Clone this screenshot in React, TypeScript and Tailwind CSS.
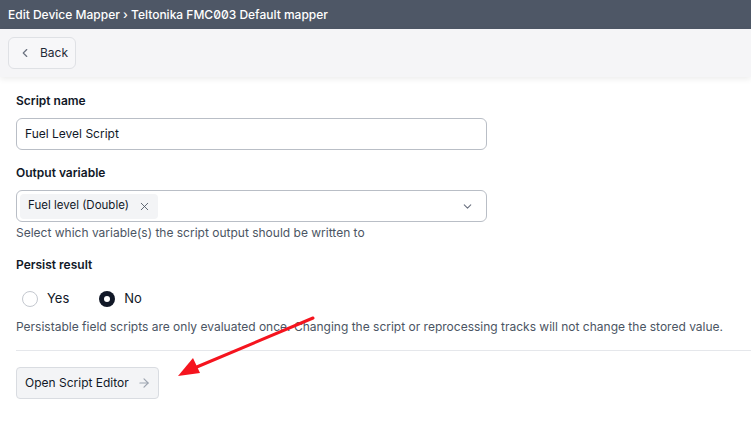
import { ArrowRight, ChevronDown, ChevronLeft, X } from 'lucide-react'

function FieldLabel({ children }: { children: React.ReactNode }) {
  return <div className="text-[12px] font-semibold leading-[18px] text-[#111827]">{children}</div>
}

function Radio({ label, checked }: { label: string; checked?: boolean }) {
  return (
    <label className="flex items-center gap-[9px]">
      {checked ? (
        <span className="flex h-4 w-4 items-center justify-center rounded-full bg-[#111827]">
          <span className="h-[6px] w-[6px] rounded-full bg-white" />
        </span>
      ) : (
        <span className="h-4 w-4 rounded-full border border-[#c4c8cf] bg-white" />
      )}
      <span className="text-[13px] text-[#111827]">{label}</span>
    </label>
  )
}

export default function App() {
  return (
    <div className="relative h-[430px] w-[751px] overflow-hidden bg-white font-['Inter',sans-serif] [font-feature-settings:'zero']">
      <div className="flex h-[29px] items-center bg-[#4e5766] px-2 text-[12px] font-medium text-white">
        Edit Device Mapper › Teltonika FMC003 Default mapper
      </div>

      <div className="flex h-[48px] items-center bg-[#f5f5f7] px-2 shadow-[0_2px_6px_rgba(0,0,0,0.08)]">
        <button className="flex h-8 items-center gap-[8px] rounded-md border border-[#dfe1e5] bg-[#f7f7f9] pl-[9px] pr-[7px] text-[12px] text-[#1f2937]">
          <ChevronLeft className="h-[14px] w-[14px] text-[#6b7280]" strokeWidth={2} />
          Back
        </button>
      </div>

      <div className="px-4 pt-[15px]">
        <FieldLabel>Script name</FieldLabel>
        <div className="mt-2 flex h-8 w-[471px] items-center rounded-md border border-[#b9bec6] px-[8px] text-[12px] text-[#111827]">
          Fuel Level Script
        </div>

        <div className="mt-[14px]">
          <FieldLabel>Output variable</FieldLabel>
        </div>
        <div className="mt-2 flex h-8 w-[471px] items-center justify-between rounded-md border border-[#b9bec6] pl-[3px] pr-[12px]">
          <span className="flex h-[25px] items-center gap-[9px] rounded bg-[#f3f4f6] pl-[8px] pr-[7px] text-[11.5px] text-[#111827]">
            Fuel level (Double)
            <X className="h-[13px] w-[13px] text-[#4b5563]" strokeWidth={1.6} />
          </span>
          <ChevronDown className="h-[13px] w-[13px] text-[#6b7280]" strokeWidth={2} />
        </div>
        <div className="mt-[3px] text-[12px] leading-4 text-[#4b5563]">
          Select which variable(s) the script output should be written to
        </div>

        <div className="mt-[15px]">
          <FieldLabel>Persist result</FieldLabel>
        </div>
        <div className="mt-[15px] flex items-center gap-[30px] pl-[6px]">
          <Radio label="Yes" />
          <Radio label="No" checked />
        </div>
        <div className="mt-[10px] text-[12px] leading-4 text-[#4b5563]">
          Persistable field scripts are only evaluated once. Changing the script or reprocessing tracks will not change the stored value.
        </div>
      </div>

      <div className="ml-4 mt-[15px] border-t border-[#e5e7eb]" />

      <div className="px-4 pt-4">
        <button className="flex h-8 items-center gap-[8px] rounded border border-[#d9dce1] bg-[#f3f4f6] pl-[8px] pr-[7px] text-[12px] text-[#111827]">
          Open Script Editor
          <ArrowRight className="h-[14px] w-[14px] text-[#9ca3af]" strokeWidth={2} />
        </button>
      </div>

      <svg className="pointer-events-none absolute left-0 top-0" width="751" height="430" viewBox="0 0 751 430">
        <line x1="313" y1="318" x2="192" y2="369" stroke="#f5141e" strokeWidth="3" strokeLinecap="round" />
        <polygon points="178,376 193,358 200,373" fill="#f5141e" />
      </svg>
    </div>
  )
}
